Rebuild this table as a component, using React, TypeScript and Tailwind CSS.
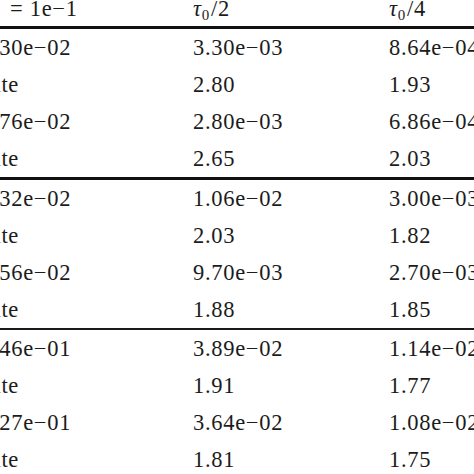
type Row = [string, string, string];

const groups: Row[][] = [
  [
    ['1.30e−02', '3.30e−03', '8.64e−04'],
    ['Rate', '2.80', '1.93'],
    ['1.76e−02', '2.80e−03', '6.86e−04'],
    ['Rate', '2.65', '2.03'],
  ],
  [
    ['1.32e−02', '1.06e−02', '3.00e−03'],
    ['Rate', '2.03', '1.82'],
    ['1.56e−02', '9.70e−03', '2.70e−03'],
    ['Rate', '1.88', '1.85'],
  ],
  [
    ['1.46e−01', '3.89e−02', '1.14e−02'],
    ['Rate', '1.91', '1.77'],
    ['1.27e−01', '3.64e−02', '1.08e−02'],
    ['Rate', '1.81', '1.75'],
  ],
];

function Tau({ d }: { d: string }) {
  return (
    <span>
      <i>τ</i>
      <span className="relative top-[4px] text-[15px]">0</span>
      <span className="ml-[1px]">/{d}</span>
    </span>
  );
}

function DataRow({ row }: { row: Row }) {
  const isRate = row[0] === 'Rate';
  return (
    <div className="flex h-[37px] items-center leading-[37px]">
      <div className="w-[212px] shrink-0">
        <span className={isRate ? 'relative -left-[6px]' : ''}>{row[0]}</span>
      </div>
      <div className="w-[196px] shrink-0">{row[1]}</div>
      <div className="w-[120px] shrink-0">{row[2]}</div>
    </div>
  );
}

export default function App() {
  return (
    <div className="h-[474px] w-[474px] overflow-hidden bg-white font-['Liberation_Serif','DejaVu_Serif',serif] text-[#1c1c1c]">
      <div className="-ml-[19px] w-[560px] text-[22.5px] tracking-[0.7px]">
        <div className="flex h-[26px] leading-[17px]">
          <div className="w-[212px] shrink-0 pl-[29px]">= 1e−1</div>
          <div className="w-[196px] shrink-0">
            <Tau d="2" />
          </div>
          <div className="w-[120px] shrink-0">
            <Tau d="4" />
          </div>
        </div>
        {groups.map((g, gi) => (
          <div key={gi}>
            <div className={gi === 2 ? 'h-[2px] bg-[#1a1a1a]' : 'h-[3px] bg-[#111]'} />
            {g.map((r, ri) => (
              <DataRow key={ri} row={r} />
            ))}
          </div>
        ))}
      </div>
    </div>
  );
}
